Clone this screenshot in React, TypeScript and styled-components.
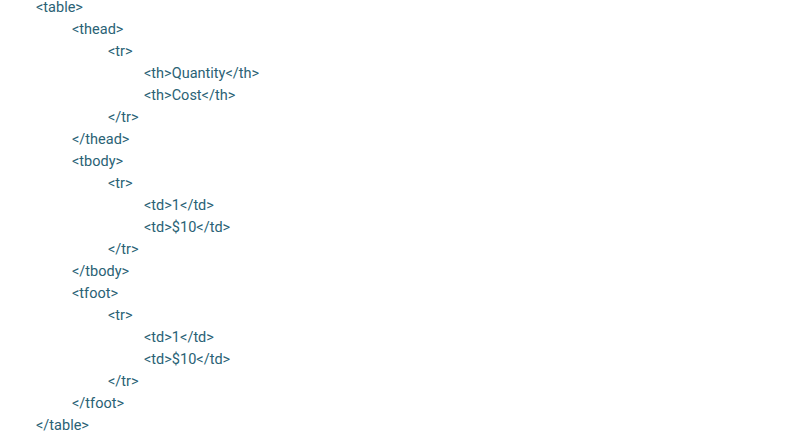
import React from "react";
import styled, { createGlobalStyle } from "styled-components";

const Global = createGlobalStyle`
  html, body { margin: 0; padding: 0; background: #ffffff; }
  body { font-family: Roboto, "Liberation Sans", sans-serif; }
`;

const Code = styled.div`
  margin-top: -3px;
  padding-left: 36px;
  font-family: Roboto, "Liberation Sans", sans-serif;
  font-size: 14.5px;
  line-height: 22px;
  color: #2a6275;
  white-space: pre;
`;

const Line = styled.div<{ $level: number }>`
  padding-left: ${(p) => p.$level * 36}px;
`;

type L = [number, string];

const lines: L[] = [
  [0, "<table>"],
  [1, "<thead>"],
  [2, "<tr>"],
  [3, "<th>Quantity</th>"],
  [3, "<th>Cost</th>"],
  [2, "</tr>"],
  [1, "</thead>"],
  [1, "<tbody>"],
  [2, "<tr>"],
  [3, "<td>1</td>"],
  [3, "<td>$10</td>"],
  [2, "</tr>"],
  [1, "</tbody>"],
  [1, "<tfoot>"],
  [2, "<tr>"],
  [3, "<td>1</td>"],
  [3, "<td>$10</td>"],
  [2, "</tr>"],
  [1, "</tfoot>"],
  [0, "</table>"],
];

export default function App() {
  return (
    <>
      <Global />
      <Code>
        {lines.map(([lvl, text], i) => (
          <Line key={i} $level={lvl}>
            {text}
          </Line>
        ))}
      </Code>
    </>
  );
}
